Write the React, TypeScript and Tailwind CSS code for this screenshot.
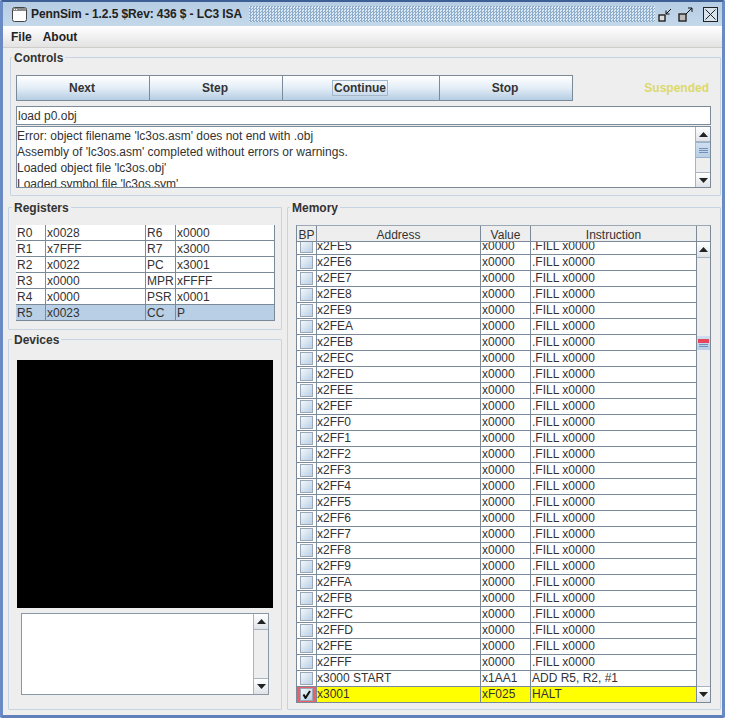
import React from "react";

const regs = [
  ["R0", "x0028", "R6", "x0000"],
  ["R1", "x7FFF", "R7", "x3000"],
  ["R2", "x0022", "PC", "x3001"],
  ["R3", "x0000", "MPR", "xFFFF"],
  ["R4", "x0000", "PSR", "x0001"],
  ["R5", "x0023", "CC", "P"],
];

const addrs = "E5 E6 E7 E8 E9 EA EB EC ED EE EF F0 F1 F2 F3 F4 F5 F6 F7 F8 F9 FA FB FC FD FE FF".split(" ");

function Arrow({ down }: { down?: boolean }) {
  return (
    <svg width="9" height="5" viewBox="0 0 9 5" className="block">
      <path d={down ? "M0 0H9L4.5 5Z" : "M0 5H9L4.5 0Z"} fill="#222" />
    </svg>
  );
}

function ScrollBtn({ down, h }: { down?: boolean; h: string }) {
  return (
    <div className={`${h} shrink-0 flex items-center justify-center bg-gradient-to-b from-white to-[#dfe3e8] ${down ? "border-t border-[#a9b4c0]" : "border-b border-[#a9b4c0]"}`}>
      <Arrow down={down} />
    </div>
  );
}

function Group({ title, titleLeft, className, children }: { title: string; titleLeft: string; className: string; children: React.ReactNode }) {
  return (
    <div className={`relative border border-[#c5d3e2] rounded-[1px] ${className}`}>
      <span className={`absolute ${titleLeft} top-[-8px] bg-[#eeeeee] px-[2px] h-[16px] leading-[16px] text-[12px] font-bold text-[#333333]`}>{title}</span>
      {children}
    </div>
  );
}

function Button({ label, w, focus }: { label: string; w: string; focus?: boolean }) {
  return (
    <div className={`${w} h-[26px] shrink-0 flex items-center justify-center pr-[2px] border border-[#7a8a99] -mr-px bg-gradient-to-b from-white via-[#e3edf6] to-[#b5cde3] text-[12px] font-bold text-[#333333]`}>
      <span className={focus ? "border border-[#a3b8cc] px-px h-[16px] leading-[14px]" : ""}>{label}</span>
    </div>
  );
}

function Check({ on }: { on?: boolean }) {
  return (
    <div className={`w-[19px] shrink-0 h-full flex items-center justify-center ${on ? "bg-[#e8606a]" : ""}`}>
      <div className="w-[13px] h-[13px] flex items-center justify-center border border-[#9aa8b5] bg-gradient-to-br from-[#f4f7fa] to-[#b9d0e6]">
        {on && (
          <svg width="9" height="9" viewBox="0 0 9 9" className="block">
            <path d="M1.5 4.5L3.5 8L8 1" fill="none" stroke="#111" strokeWidth="2" />
          </svg>
        )}
      </div>
    </div>
  );
}

function MemRow({ bp, addr, val, ins, hi }: { bp?: boolean; addr: string; val: string; ins: string; hi?: boolean }) {
  return (
    <div className={`flex h-[16px] shrink-0 border-b border-[#7a8a99] leading-[15px] ${hi ? "bg-[#ffff00]" : "bg-white"}`}>
      <Check on={bp} />
      <div className="w-[164px] shrink-0 border-l border-[#7a8a99]">{addr}</div>
      <div className="w-[50px] shrink-0 border-l border-[#7a8a99] pl-px">{val}</div>
      <div className="flex-1 border-l border-[#7a8a99] pl-px">{ins}</div>
    </div>
  );
}

export default function App() {
  return (
    <div className="w-[730px] h-[723px] bg-white font-['Liberation_Sans',Arial,sans-serif] text-[12px] text-[#333333] overflow-hidden">
      <div className="w-[725px] h-[718px] flex flex-col border-t-2 border-l-[3px] border-r-[3px] border-b-[3px] border-t-[#3d5f96] border-l-[#6a8ac4] border-r-[#6a8ac4] border-b-[#5f80ba] rounded-[2px] bg-[#eeeeee]">
        {/* title bar */}
        <div className="h-[24px] shrink-0 flex items-center pl-[9px] pr-[4px] bg-gradient-to-b from-[#b6cce3] to-[#c4d8ea]">
          <svg width="15" height="15" viewBox="0 0 15 15" className="shrink-0">
            <rect x="0.5" y="0.5" width="14" height="14" rx="2" fill="#fff" stroke="#444" />
            <rect x="1" y="1" width="13" height="3" fill="#8b8b8b" />
            <path d="M2 2.5H6" stroke="#fff" strokeDasharray="1 1" />
          </svg>
          <span className="ml-[4px] font-bold text-[12px] tracking-[-0.1px] text-[#222222] whitespace-nowrap">PennSim - 1.2.5 $Rev: 436 $ - LC3 ISA</span>
          <div className="ml-[7px] flex-1 h-[16px] bg-[repeating-conic-gradient(#8eaccb_0_25%,#dce8f3_0_50%)] bg-[length:3px_3px]" />
          <div className="flex items-center ml-[2px]">
            <svg width="17" height="15" viewBox="0 0 17 15">
              <rect x="2" y="8" width="6" height="6" fill="#ddd" stroke="#222" strokeWidth="1.4" />
              <path d="M14 2L9 7M9 3.5V7H12.5" fill="none" stroke="#111" />
            </svg>
            <svg width="17" height="15" viewBox="0 0 17 15" className="ml-[3px]">
              <rect x="2" y="7" width="7" height="7" fill="#bbb" stroke="#222" strokeWidth="1.4" />
              <path d="M9 7L15 1M11 1H15V5" fill="none" stroke="#111" />
            </svg>
            <svg width="15" height="15" viewBox="0 0 15 15" className="ml-[9px]">
              <rect x="0.5" y="0.5" width="14" height="14" fill="#d8e2ec" stroke="#222" />
              <path d="M2.5 2.5L12.5 12.5M12.5 2.5L2.5 12.5" stroke="#222" />
            </svg>
          </div>
        </div>
        {/* menu */}
        <div className="h-[22px] shrink-0 flex items-center gap-[11px] pl-[8px] font-bold bg-gradient-to-b from-white to-[#e3e3e3] border-b border-[#d0ccc8] text-[#222222]">
          <span>File</span>
          <span>About</span>
        </div>
        {/* body */}
        <div className="flex-1 min-h-0 flex flex-col pt-[9px] pl-[5px] pr-[1px] pb-[5px] gap-[11px]">
          <Group title="Controls" titleLeft="left-[1px]" className="ml-[2px] h-[139px] shrink-0 pt-[17px] pl-[5px] pr-[9px]">
            <div className="flex items-center">
              <Button label="Next" w="w-[134px]" />
              <Button label="Step" w="w-[134px]" />
              <Button label="Continue" w="w-[158px]" focus />
              <Button label="Stop" w="w-[134px]" />
              <span className="ml-auto font-bold text-[#dcd96a] mr-[2px]">Suspended</span>
            </div>
            <div className="mt-[5px] h-[19px] border border-[#7a8a99] bg-white pl-px leading-[19px]">load p0.obj</div>
            <div className="mt-px h-[62px] border border-[#7a8a99] bg-white flex overflow-hidden">
              <div className="flex-1 pt-px leading-[16px] overflow-hidden whitespace-nowrap">
                <div>Error: object filename 'lc3os.asm' does not end with .obj</div>
                <div>Assembly of 'lc3os.asm' completed without errors or warnings.</div>
                <div>Loaded object file 'lc3os.obj'</div>
                <div>Loaded symbol file 'lc3os.sym'</div>
              </div>
              <div className="w-[15px] shrink-0 border-l border-[#a9b4c0] bg-[#eeeeee] flex flex-col">
                <ScrollBtn h="h-[15px]" />
                <div className="h-[16px] shrink-0 flex flex-col items-center justify-center gap-px border-y border-[#9ab3cd] bg-gradient-to-b from-[#cfdff0] to-[#b9cfe6]">
                  <div className="w-[9px] h-px bg-[#7090b8]" />
                  <div className="w-[9px] h-px bg-[#7090b8]" />
                  <div className="w-[9px] h-px bg-[#7090b8]" />
                </div>
                <div className="flex-1" />
                <ScrollBtn down h="h-[15px]" />
              </div>
            </div>
          </Group>
          <div className="flex-1 min-h-0 flex gap-[5px]">
            <div className="w-[274px] shrink-0 flex flex-col gap-[9px]">
              <Group title="Registers" titleLeft="left-[3px]" className="h-[123px] shrink-0 pt-[17px] pl-[7px] pr-[6px]">
                <div className="border-r border-[#7a8a99]">
                  {regs.map((r, i) => (
                    <div key={r[0]} className={`flex h-[16px] border-b border-[#7a8a99] leading-[17px] ${i === 5 ? "bg-[#b8cfe5]" : "bg-white"}`}>
                      <div className="w-[29px] shrink-0 pl-px">{r[0]}</div>
                      <div className="w-[100px] shrink-0 border-l border-[#7a8a99] pl-px">{r[1]}</div>
                      <div className="w-[30px] shrink-0 border-l border-[#7a8a99] pl-px">{r[2]}</div>
                      <div className="flex-1 border-l border-[#7a8a99] pl-px">{r[3]}</div>
                    </div>
                  ))}
                </div>
              </Group>
              <Group title="Devices" titleLeft="left-[3px]" className="flex-1 min-h-0 pt-[20px] pl-[8px] pr-[8px]">
                <div className="h-[248px] bg-black" />
                <div className="mt-[5px] mx-[4px] h-[82px] border border-[#8a97a5] bg-white flex">
                  <div className="flex-1" />
                  <div className="w-[15px] shrink-0 border-l border-[#a9b4c0] bg-[#eeeeee] flex flex-col">
                    <ScrollBtn h="h-[16px]" />
                    <div className="flex-1" />
                    <ScrollBtn down h="h-[16px]" />
                  </div>
                </div>
              </Group>
            </div>
            <Group title="Memory" titleLeft="left-[2px]" className="flex-1 min-w-0 pt-[17px] pl-[8px] pr-[9px]">
              <div className="h-[478px] flex flex-col border border-[#7a8a99] border-t-[#9aa8b5] bg-[#eeeeee] overflow-hidden">
                <div className="h-[16px] shrink-0 flex text-center leading-[19px] border-b border-[#7a8a99] bg-[#eeeeee]">
                  <div className="w-[19px] shrink-0">BP</div>
                  <div className="w-[164px] shrink-0 border-l border-[#7a8a99]">Address</div>
                  <div className="w-[50px] shrink-0 border-l border-[#7a8a99]">Value</div>
                  <div className="w-[166px] shrink-0 border-l border-[#7a8a99]">Instruction</div>
                  <div className="flex-1 border-l border-[#7a8a99]" />
                </div>
                <div className="flex-1 min-h-0 flex">
                  <div className="w-[400px] shrink-0 overflow-hidden border-r border-[#7a8a99]">
                    <div className="-mt-[3px]">
                      {addrs.map((a) => (
                        <MemRow key={a} addr={`x2F${a}`} val="x0000" ins=".FILL x0000" />
                      ))}
                      <MemRow addr="x3000 START" val="x1AA1" ins="ADD R5, R2, #1" />
                      <MemRow bp hi addr="x3001" val="xF025" ins="HALT" />
                    </div>
                  </div>
                  <div className="flex-1 flex flex-col bg-[#eeeeee]">
                    <ScrollBtn h="h-[16px]" />
                    <div className="h-[78px] shrink-0" />
                    <div className="h-[14px] shrink-0 flex flex-col items-center justify-center gap-px bg-gradient-to-b from-[#cfdff0] to-[#b9cfe6]">
                      <div className="w-[11px] h-[4px] bg-[#e8455a]" />
                      <div className="w-[9px] h-px bg-[#7090b8]" />
                      <div className="w-[9px] h-px bg-[#7090b8]" />
                    </div>
                    <div className="flex-1" />
                    <ScrollBtn down h="h-[16px]" />
                  </div>
                </div>
              </div>
            </Group>
          </div>
        </div>
      </div>
    </div>
  );
}
